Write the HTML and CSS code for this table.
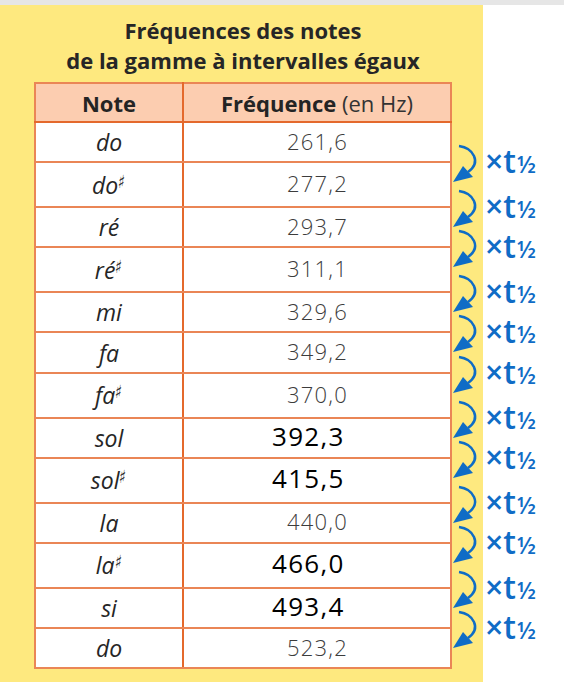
FILE: index.html
```html
<!DOCTYPE html>
<html lang="fr">
<head>
<meta charset="utf-8">
<link rel="stylesheet" href="styles.css">
</head>
<body>
<div class="topbar"></div>
<div class="panel">
  <h1 class="title">Fréquences des notes<br>de la gamme à intervalles égaux</h1>
  <table class="freq-table">
    <thead>
      <tr class="head">
        <th class="c-note">Note</th>
        <th class="c-freq"><b>Fréquence</b> <span class="unit">(en Hz)</span></th>
      </tr>
    </thead>
    <tbody>
      <tr class="r n"><td class="note">do</td><td class="val"><span class="g">261,6</span><span class="ann"><svg class="arr" viewBox="0 0 30 40"><path d="M8 2 C22 4 31 18 17 28" /><polygon points="2,38 12,22 22,33" /></svg><span class="lab">×t<span class="half">½</span></span></span></td></tr>
      <tr class="r s"><td class="note">do<sup>♯</sup></td><td class="val"><span class="g">277,2</span><span class="ann"><svg class="arr" viewBox="0 0 30 40"><path d="M8 2 C22 4 31 18 17 28" /><polygon points="2,38 12,22 22,33" /></svg><span class="lab">×t<span class="half">½</span></span></span></td></tr>
      <tr class="r n"><td class="note">ré</td><td class="val"><span class="g">293,7</span><span class="ann"><svg class="arr" viewBox="0 0 30 40"><path d="M8 2 C22 4 31 18 17 28" /><polygon points="2,38 12,22 22,33" /></svg><span class="lab">×t<span class="half">½</span></span></span></td></tr>
      <tr class="r s"><td class="note">ré<sup>♯</sup></td><td class="val"><span class="g">311,1</span><span class="ann"><svg class="arr" viewBox="0 0 30 40"><path d="M8 2 C22 4 31 18 17 28" /><polygon points="2,38 12,22 22,33" /></svg><span class="lab">×t<span class="half">½</span></span></span></td></tr>
      <tr class="r n"><td class="note">mi</td><td class="val"><span class="g">329,6</span><span class="ann"><svg class="arr" viewBox="0 0 30 40"><path d="M8 2 C22 4 31 18 17 28" /><polygon points="2,38 12,22 22,33" /></svg><span class="lab">×t<span class="half">½</span></span></span></td></tr>
      <tr class="r n"><td class="note">fa</td><td class="val"><span class="g">349,2</span><span class="ann"><svg class="arr" viewBox="0 0 30 40"><path d="M8 2 C22 4 31 18 17 28" /><polygon points="2,38 12,22 22,33" /></svg><span class="lab">×t<span class="half">½</span></span></span></td></tr>
      <tr class="r s"><td class="note">fa<sup>♯</sup></td><td class="val"><span class="g">370,0</span><span class="ann"><svg class="arr" viewBox="0 0 30 40"><path d="M8 2 C22 4 31 18 17 28" /><polygon points="2,38 12,22 22,33" /></svg><span class="lab">×t<span class="half">½</span></span></span></td></tr>
      <tr class="r n"><td class="note">sol</td><td class="val"><span class="k">392,3</span><span class="ann"><svg class="arr" viewBox="0 0 30 40"><path d="M8 2 C22 4 31 18 17 28" /><polygon points="2,38 12,22 22,33" /></svg><span class="lab">×t<span class="half">½</span></span></span></td></tr>
      <tr class="r s"><td class="note">sol<sup>♯</sup></td><td class="val"><span class="k">415,5</span><span class="ann"><svg class="arr" viewBox="0 0 30 40"><path d="M8 2 C22 4 31 18 17 28" /><polygon points="2,38 12,22 22,33" /></svg><span class="lab">×t<span class="half">½</span></span></span></td></tr>
      <tr class="r n"><td class="note">la</td><td class="val"><span class="g">440,0</span><span class="ann"><svg class="arr" viewBox="0 0 30 40"><path d="M8 2 C22 4 31 18 17 28" /><polygon points="2,38 12,22 22,33" /></svg><span class="lab">×t<span class="half">½</span></span></span></td></tr>
      <tr class="r s"><td class="note">la<sup>♯</sup></td><td class="val"><span class="k">466,0</span><span class="ann"><svg class="arr" viewBox="0 0 30 40"><path d="M8 2 C22 4 31 18 17 28" /><polygon points="2,38 12,22 22,33" /></svg><span class="lab">×t<span class="half">½</span></span></span></td></tr>
      <tr class="r n"><td class="note">si</td><td class="val"><span class="k">493,4</span><span class="ann"><svg class="arr" viewBox="0 0 30 40"><path d="M8 2 C22 4 31 18 17 28" /><polygon points="2,38 12,22 22,33" /></svg><span class="lab">×t<span class="half">½</span></span></span></td></tr>
      <tr class="r n last"><td class="note">do</td><td class="val"><span class="g">523,2</span></td></tr>
    </tbody>
  </table>
</div>
</body>
</html>
```

FILE: styles.css
```css
html, body {
  margin: 0;
  padding: 0;
  background: #ffffff;
}
body {
  width: 564px;
  height: 695px;
  overflow: hidden;
  font-family: "Open Sans", "Noto Sans", sans-serif;
}
.topbar {
  height: 5px;
  background: #e6e6e6;
}
.panel {
  width: 483px;
  height: 677px;
  background: #fee97f;
  box-sizing: border-box;
  padding-top: 10px;
  padding-left: 34px;
}
.title {
  margin: 0;
  width: 418px;
  text-align: center;
  font-family: "Open Sans", sans-serif;
  font-weight: 700;
  font-size: 22px;
  line-height: 30px;
  color: #262626;
}
.freq-table {
  margin-top: 7px;
  width: 418px;
  border-collapse: collapse;
  border: 2px solid #e4692c;
  background: #ffffff;
}
.freq-table th,
.freq-table td {
  padding: 0;
  border: 2px solid #ea8656;
  line-height: 24px;
}
.head {
  height: 39px;
}
.head th {
  background: #fccdb0;
  border-bottom: 2px solid #e4692c;
  font-size: 22px;
  font-weight: 400;
  color: #242424;
}
.head th b {
  font-weight: 700;
}
.head .unit {
  font-weight: 400;
  color: #333;
}
.c-note {
  width: 146px;
  font-weight: 700 !important;
}
.freq-table td.note,
.head th.c-note {
  border-right: 2px solid #e4692c;
}
.r.n { height: 40.3px; }
.r.s { height: 44.8px; }
.note {
  text-align: center;
  font-style: italic;
  font-size: 23px;
  color: #262626;
  font-family: "Open Sans", sans-serif;
}
.note sup {
  display: inline-block;
  font-size: 18px;
  font-style: normal;
  font-family: "DejaVu Sans", sans-serif;
  vertical-align: 6px;
  line-height: 0;
  transform: scaleX(0.75) skewX(-8deg);
  margin-left: -1px;
}
.val {
  position: relative;
  padding-left: 103px !important;
  text-align: left;
}
.g {
  font-family: "Open Sans", sans-serif;
  font-weight: 300;
  font-size: 22px;
  letter-spacing: 1.2px;
  color: #3c3c3c;
}
.k {
  display: inline-block;
  margin-left: -15px;
  font-family: "Open Sans", sans-serif;
  font-weight: 400;
  font-size: 26px;
  letter-spacing: 1.3px;
  color: #000000;
}
.ann {
  position: absolute;
  left: calc(100% + 1px);
  top: 100%;
  transform: translateY(-50%);
  display: flex;
  align-items: center;
  height: 40px;
}
.arr {
  width: 30px;
  height: 40px;
  margin-top: 6px;
  overflow: visible;
}
.arr path {
  fill: none;
  stroke: #0f6cc6;
  stroke-width: 2.5;
}
.arr polygon {
  fill: #0f6cc6;
}
.lab {
  margin-left: 4px;
  font-family: "Open Sans", sans-serif;
  font-weight: 600;
  font-size: 32px;
  line-height: 1;
  color: #0f6cc6;
  white-space: nowrap;
}
.half {
  font-size: 23px;
  font-weight: 600;
  margin-left: 1px;
}
```
